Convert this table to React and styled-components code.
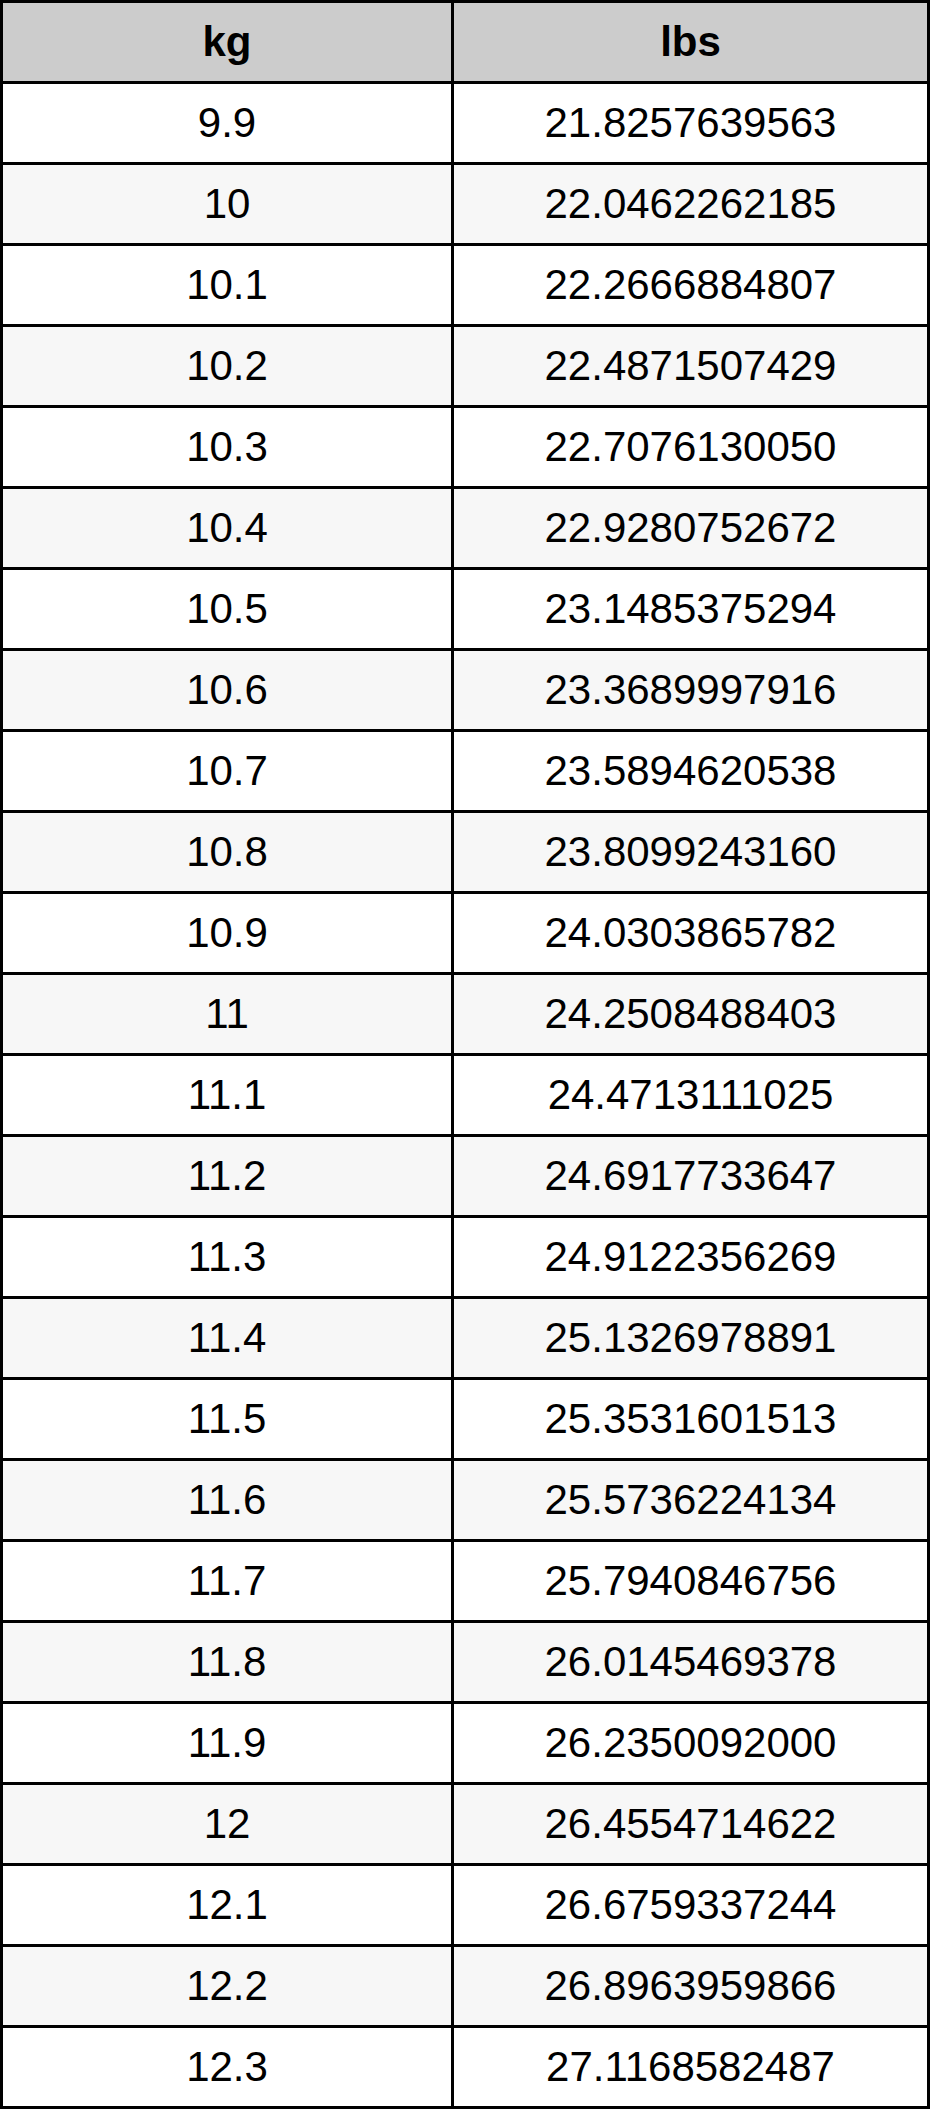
import React from "react";
import styled, { createGlobalStyle } from "styled-components";

const GlobalStyle = createGlobalStyle`
  html, body {
    margin: 0;
    padding: 0;
    background: #ffffff;
  }
  body {
    font-family: "Liberation Sans", Arial, sans-serif;
  }
`;

const Table = styled.table`
  width: 930px;
  border-collapse: collapse;
  table-layout: fixed;
  border: 3px solid #000;
  font-family: "Liberation Sans", Arial, sans-serif;
  font-size: 42px;
  color: #000;
`;

const KgCol = styled.col`
  width: 451px;
`;

const HeadCell = styled.th`
  height: 78px;
  padding: 0;
  border: 3px solid #000;
  background: #cccccc;
  font-weight: bold;
  text-align: center;
  vertical-align: middle;
`;

const Row = styled.tr`
  background: ${(p) => (p.$alt ? "#f7f7f7" : "#ffffff")};
`;

const Cell = styled.td`
  height: 78px;
  padding: 0;
  border: 3px solid #000;
  text-align: center;
  vertical-align: middle;
`;

const rows = [
  ["9.9", "21.8257639563"],
  ["10", "22.0462262185"],
  ["10.1", "22.2666884807"],
  ["10.2", "22.4871507429"],
  ["10.3", "22.7076130050"],
  ["10.4", "22.9280752672"],
  ["10.5", "23.1485375294"],
  ["10.6", "23.3689997916"],
  ["10.7", "23.5894620538"],
  ["10.8", "23.8099243160"],
  ["10.9", "24.0303865782"],
  ["11", "24.2508488403"],
  ["11.1", "24.4713111025"],
  ["11.2", "24.6917733647"],
  ["11.3", "24.9122356269"],
  ["11.4", "25.1326978891"],
  ["11.5", "25.3531601513"],
  ["11.6", "25.5736224134"],
  ["11.7", "25.7940846756"],
  ["11.8", "26.0145469378"],
  ["11.9", "26.2350092000"],
  ["12", "26.4554714622"],
  ["12.1", "26.6759337244"],
  ["12.2", "26.8963959866"],
  ["12.3", "27.1168582487"],
];

export default function App() {
  return (
    <>
      <GlobalStyle />
      <Table>
        <colgroup>
          <KgCol />
          <col />
        </colgroup>
        <thead>
          <tr>
            <HeadCell>kg</HeadCell>
            <HeadCell>lbs</HeadCell>
          </tr>
        </thead>
        <tbody>
          {rows.map(([kg, lbs], i) => (
            <Row key={kg} $alt={i % 2 === 1}>
              <Cell>{kg}</Cell>
              <Cell>{lbs}</Cell>
            </Row>
          ))}
        </tbody>
      </Table>
    </>
  );
}
